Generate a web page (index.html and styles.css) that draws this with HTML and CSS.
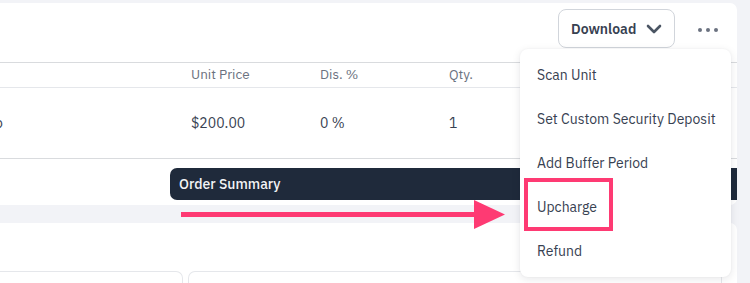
FILE: index.html
```html
<!DOCTYPE html>
<html>
<head>
<meta charset="utf-8">
<link rel="stylesheet" href="styles.css">
</head>
<body>
<div class="page">
  <section class="card top-card">
    <div class="toolbar">
      <button class="btn-download">Download
        <svg class="chev" width="16" height="10" viewBox="0 0 16 10"><path d="M2 2 L8 8 L14 2" fill="none" stroke="#4b5563" stroke-width="2.6" stroke-linecap="round" stroke-linejoin="round"/></svg>
      </button>
      <div class="dots"><span></span><span></span><span></span></div>
    </div>
    <div class="table">
      <div class="row head">
        <div class="c c0"></div>
        <div class="c c1">Unit Price</div>
        <div class="c c2">Dis. %</div>
        <div class="c c3">Qty.</div>
      </div>
      <div class="row body">
        <div class="c c0"><span class="clip">o</span></div>
        <div class="c c1">$200.00</div>
        <div class="c c2">0 %</div>
        <div class="c c3">1</div>
      </div>
    </div>
    <div class="summary-wrap">
      <div class="summary">Order Summary</div>
    </div>
  </section>
  <section class="card bottom-card">
    <div class="sub-cards">
      <div class="sub sub1"></div>
      <div class="sub sub2"></div>
    </div>
  </section>

  <div class="menu">
    <div class="item">Scan Unit</div>
    <div class="item">Set Custom Security Deposit</div>
    <div class="item">Add Buffer Period</div>
    <div class="item">Upcharge</div>
    <div class="item">Refund</div>
  </div>
  <div class="highlight"></div>
  <svg class="arrow" width="330" height="32" viewBox="0 0 330 32">
    <rect x="0" y="12" width="296" height="5" fill="#fe3a73"/>
    <polygon points="293,0 324,14.5 293,29" fill="#fe3a73"/>
  </svg>
</div>
</body>
</html>
```
FILE: styles.css
```css
* { box-sizing: border-box; }
html, body { margin: 0; padding: 0; }
body {
  background: #f2f3f7;
  font-family: "IBM Plex Sans", Inter, "Noto Sans", sans-serif;
  color: #374151;
  width: 750px;
  height: 283px;
  overflow: hidden;
}
.page { position: relative; width: 750px; height: 283px; padding-top: 3px; overflow: hidden; }
.card { background: #fff; width: 737px; }
.top-card {
  height: 202px;
  border-radius: 0 7px 7px 0;
  display: flex;
  flex-direction: column;
}
.toolbar {
  height: 59px;
  display: flex;
  align-items: flex-start;
  justify-content: flex-end;
  padding: 6px 19px 0 0;
  gap: 23px;
}
.btn-download {
  width: 117px;
  height: 39px;
  border: 1px solid #d1d5db;
  border-radius: 8px;
  background: #fff;
  font-family: inherit;
  font-size: 14px;
  font-weight: 600;
  color: #374151;
  display: flex;
  align-items: center;
  padding: 0 0 0 12px;
  gap: 10px;
}
.chev { margin-top: 1px; }
.dots { display: flex; gap: 4px; margin-top: 19px; }
.dots span { width: 4px; height: 4px; border-radius: 50%; background: #6b7280; }
.table { display: flex; flex-direction: column; }
.row { display: flex; }
.row.head {
  height: 26px;
  border-top: 1px solid #d9dbde;
  border-bottom: 1px solid #e5e7eb;
  font-size: 13.5px;
  color: #6b7280;
  align-items: center;
  padding-bottom: 2px;
}
.row.body {
  height: 71px;
  border-bottom: 1px solid #d9dbde;
  font-size: 14px;
  color: #374151;
  align-items: center;
  padding-bottom: 1px;
}
.c0 { width: 191px; overflow: hidden; }
.c1 { width: 129px; }
.c2 { width: 129px; }
.c3 { width: 60px; }
.clip { display: inline-block; margin-left: -5px; }
.summary-wrap { padding: 9px 0 0 170px; }
.summary {
  height: 32px;
  background: #1f2a3b;
  color: #f3f4f6;
  border-radius: 7px 0 0 7px;
  font-size: 14px;
  font-weight: 500;
  display: flex;
  align-items: center;
  padding-left: 9px;
}
.bottom-card {
  margin-top: 18px;
  height: 60px;
  border-radius: 0 7px 0 0;
  padding-top: 48px;
}
.sub-cards { display: flex; gap: 5px; }
.sub { height: 12px; border: 1px solid #e5e7eb; border-bottom: none; }
.sub1 { width: 183px; border-left: none; border-radius: 0 7px 0 0; }
.sub2 { width: 534px; border-radius: 7px 7px 0 0; }
.menu {
  position: absolute;
  left: 520px;
  top: 49px;
  width: 211px;
  background: #fff;
  border-radius: 8px;
  padding: 4px 0;
  box-shadow: 0 2px 8px rgba(17, 24, 39, 0.10), 0 0 2px rgba(17, 24, 39, 0.05);
}
.item {
  height: 44px;
  display: flex;
  align-items: center;
  padding-left: 17px;
  font-size: 14px;
  color: #374151;
}
.highlight {
  position: absolute;
  left: 524px;
  top: 178px;
  width: 89px;
  height: 53px;
  border: 4px solid #fe3a73;
}
.arrow { position: absolute; left: 181px; top: 200px; }
```
